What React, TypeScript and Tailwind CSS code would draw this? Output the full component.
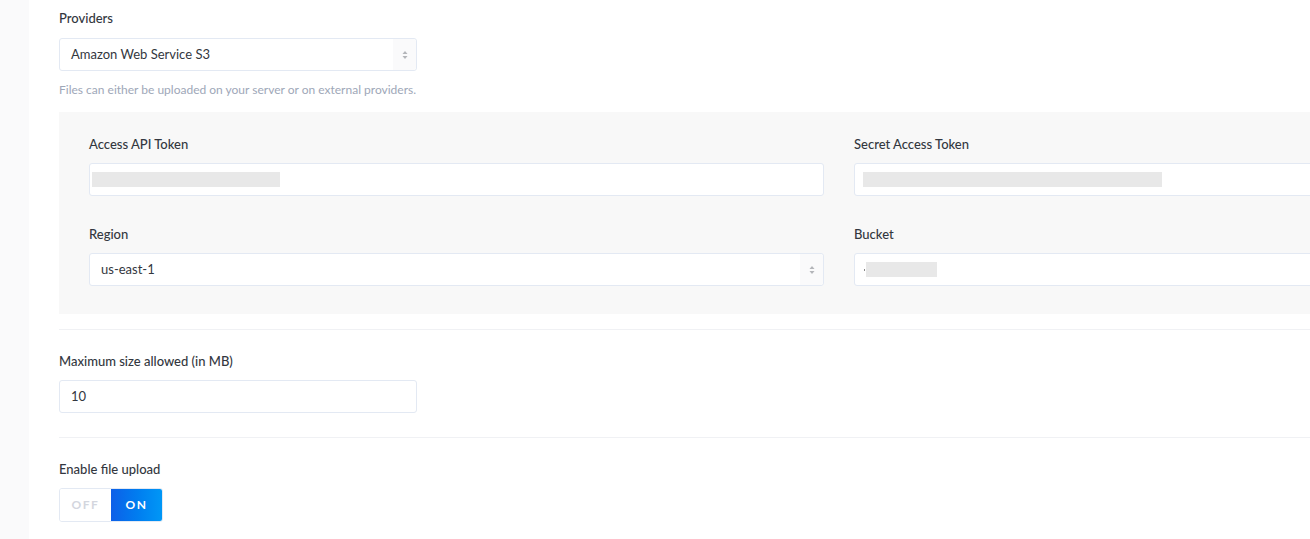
import React from 'react';

const labelCls = "block text-[13px] leading-[18px] font-medium text-[#333740]";
const inputCls = "h-[33px] bg-white border border-[#e3e9f3] rounded-[3px] flex items-center text-[13px] text-[#333740] relative";

const SelectArrow = () => (
  <div className="absolute right-0 top-0 bottom-0 w-[23px] bg-[#fafafb] rounded-r-[3px] flex items-center justify-center">
    <svg width="6" height="10" viewBox="0 0 6 10">
      <path d="M3 1 L5.5 4 H0.5 Z" fill="#b3b5b9" />
      <path d="M3 9 L5.5 6 H0.5 Z" fill="#b3b5b9" />
    </svg>
  </div>
);

const Redacted = ({ w, ml }: { w: number; ml: number }) => (
  <div className="h-[15px] bg-[#e8e8e8]" style={{ width: w, marginLeft: ml }} />
);

const App: React.FC = () => {
  return (
    <div className="h-[539px] w-[1310px] overflow-hidden bg-[#fafafb]" style={{ fontFamily: "Lato, 'Open Sans', sans-serif" }}>
      <div className="ml-[29px] h-full bg-white pl-[30px] pt-[9px]">
        {/* Providers */}
        <label className={labelCls}>Providers</label>
        <div className={`${inputCls} w-[358px] mt-[11px] pl-[11px]`}>
          Amazon Web Service S3
          <SelectArrow />
        </div>
        <p className="mt-[11px] text-[12px] leading-[16px] text-[#9ea7b8]">
          Files can either be uploaded on your server or on external providers.
        </p>

        {/* Provider settings */}
        <div className="mt-[14px] w-[1560px] bg-[#f8f8f8] pt-[23px] pb-[28px] px-[30px]">
          <div className="grid grid-cols-[735px_735px] gap-x-[30px] gap-y-[29px]">
            <div>
              <label className={labelCls}>Access API Token</label>
              <div className={`${inputCls} w-full mt-[10px]`}>
                <Redacted w={188} ml={2} />
              </div>
            </div>
            <div>
              <label className={labelCls}>Secret Access Token</label>
              <div className={`${inputCls} w-full mt-[10px]`}>
                <Redacted w={299} ml={8} />
              </div>
            </div>
            <div>
              <label className={labelCls}>Region</label>
              <div className={`${inputCls} w-full mt-[10px] pl-[11px]`}>
                us-east-1
                <SelectArrow />
              </div>
            </div>
            <div>
              <label className={labelCls}>Bucket</label>
              <div className={`${inputCls} w-full mt-[10px]`}>
                <div className="ml-[9px] w-[1px] h-[2px] bg-[#888]" />
                <Redacted w={71} ml={1} />
              </div>
            </div>
          </div>
        </div>

        <div className="mt-[15px] h-px bg-[#f0f1f4]" />

        {/* Max size */}
        <label className={`${labelCls} mt-[22px]`}>Maximum size allowed (in MB)</label>
        <div className={`${inputCls} w-[358px] mt-[10px] pl-[11px]`}>10</div>

        <div className="mt-[24px] h-px bg-[#f0f1f4]" />

        {/* Enable upload */}
        <label className={`${labelCls} mt-[22px]`}>Enable file upload</label>
        <div className="mt-[10px] flex w-[104px] h-[34px] rounded-[3px] border border-[#e3e9f3] overflow-hidden text-[12px] font-bold tracking-[1.5px]">
          <div className="flex-1 flex items-center justify-center bg-white text-[#d3d6de]">OFF</div>
          <div className="flex-1 flex items-center justify-center bg-gradient-to-r from-[#0e5fe8] to-[#0097f6] text-white">ON</div>
        </div>
      </div>
    </div>
  );
};

export default App;
